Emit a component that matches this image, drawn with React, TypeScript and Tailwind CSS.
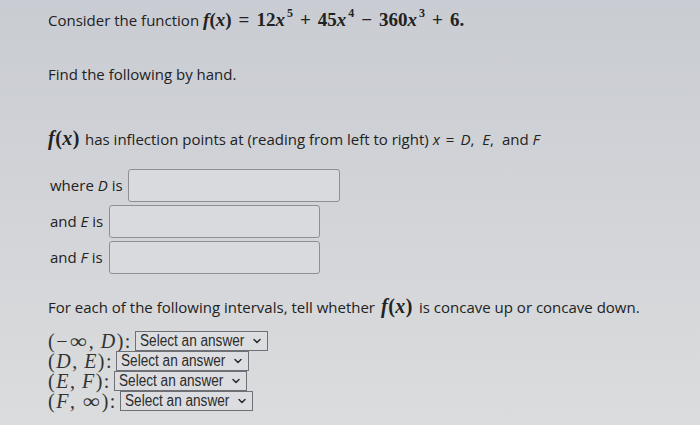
import { ChevronDown } from "lucide-react";

function MathX() {
  return <span className="italic">x</span>;
}

function Op({ children }: { children: React.ReactNode }) {
  return <span className="mx-[7px]">{children}</span>;
}

function Sup({ children }: { children: React.ReactNode }) {
  return <span className="relative top-[-9px] ml-[2px] text-[12px]">{children}</span>;
}

function Fx() {
  return (
    <span className="font-['Liberation_Serif',serif] text-[20px] font-bold tracking-[0.5px]">
      <span className="italic">f</span>(<MathX />)
    </span>
  );
}

function Inf() {
  return <span className="inline-block scale-x-[1.2] px-[2px]">∞</span>;
}

function AnswerBox({ wide }: { wide?: boolean }) {
  return (
    <div
      className={`h-[33px] rounded-[3px] border border-[#8d8f93] bg-[#d9dadd] ${
        wide ? "w-[212px]" : "w-[211px]"
      }`}
    />
  );
}

function SelectBox() {
  return (
    <div className="flex h-[20px] w-[133px] items-center justify-between border border-[#6e7075] bg-[#dcdde0] pl-[4px] pr-[4px] font-['Liberation_Sans',sans-serif] text-[16px] leading-none text-[#2b2b2b]">
      <span className="inline-block w-[108px] whitespace-nowrap">
        <span className="inline-block origin-left scale-x-[0.85]">Select an answer</span>
      </span>
      <ChevronDown className="h-[12px] w-[12px] text-[#2b2b2b]" strokeWidth={3} />
    </div>
  );
}

function App() {
  const intervals = [
    <>
      (−<Inf />,&thinsp;<i>D</i>):
    </>,
    <>
      (<i>D</i>,&thinsp;<i>E</i>):
    </>,
    <>
      (<i>E</i>,&thinsp;<i>F</i>):
    </>,
    <>
      (<i>F</i>,&thinsp;<Inf />):
    </>,
  ];

  return (
    <div className="h-[425px] w-[700px] overflow-hidden bg-gradient-to-b from-[#c9ccd2] via-[#d2d4d8] to-[#dadcdd] pl-[48px] font-['Open_Sans',sans-serif] text-[15px] text-[#222]">
      <div className="flex items-baseline pt-[6px]">
        <span>Consider the function</span>
        <span className="ml-[4px] font-['Liberation_Serif',serif] text-[19px] font-bold">
          <span className="italic">f</span>(<MathX />)<Op>=</Op>12<MathX />
          <Sup>5</Sup>
          <Op>+</Op>45<MathX />
          <Sup>4</Sup>
          <Op>−</Op>360<MathX />
          <Sup>3</Sup>
          <Op>+</Op>6.
        </span>
      </div>

      <div className="mt-[28px]">Find the following by hand.</div>

      <div className="mt-[38px] flex items-baseline">
        <Fx />
        <span className="ml-[5px]">
          has inflection points at (reading from left to right) <i>x</i>
          <span className="mx-[6px]">=</span>
          <i>D</i>,<span className="ml-[8px]" />
          <i>E</i>,<span className="ml-[8px]" />
          and <i>F</i>
        </span>
      </div>

      <div className="mt-[16px] flex flex-col gap-[3px]">
        <div className="flex items-center gap-[5px]">
          <span className="pl-[2px]">
            where <i>D</i> is
          </span>
          <AnswerBox wide />
        </div>
        <div className="flex items-center gap-[6px]">
          <span className="pl-[2px]">
            and <i>E</i> is
          </span>
          <AnswerBox />
        </div>
        <div className="flex items-center gap-[6px]">
          <span className="pl-[2px]">
            and <i>F</i> is
          </span>
          <AnswerBox />
        </div>
      </div>

      <div className="mt-[17px] flex items-baseline">
        <span>For each of the following intervals, tell whether</span>
        <span className="ml-[6px]">
          <Fx />
        </span>
        <span className="ml-[6px]">is concave up or concave down.</span>
      </div>

      <div className="mt-[10px] flex flex-col gap-0">
        {intervals.map((label, i) => (
          <div key={i} className="flex h-[20px] items-center gap-[3px]">
            <span className="font-['Liberation_Serif',serif] text-[20px] leading-[20px] tracking-[1.5px] text-[#333]">
              {label}
            </span>
            <SelectBox />
          </div>
        ))}
      </div>
    </div>
  );
}

export default App;
